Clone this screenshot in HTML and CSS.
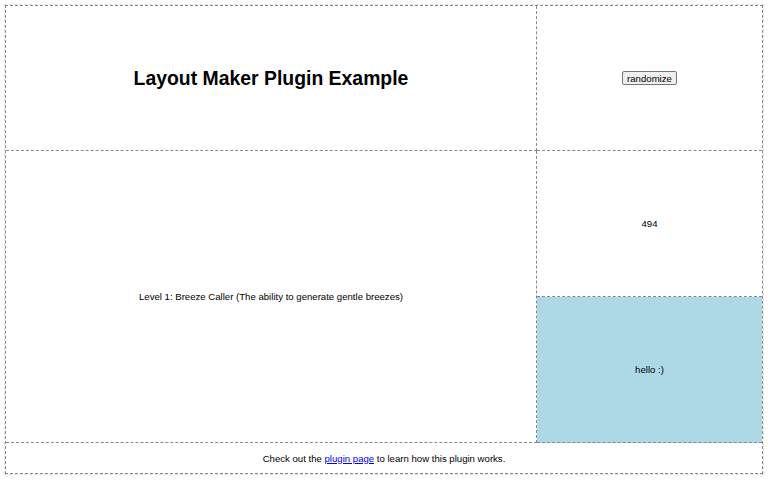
FILE: index.html
```html
<!DOCTYPE html>
<html>
<head>
<meta charset="utf-8">
<link rel="stylesheet" href="styles.css">
</head>
<body>
<div class="layout">
  <div class="cell title-cell"><h1 class="title">Layout Maker Plugin Example</h1></div>
  <div class="cell side"><button class="btn">randomize</button></div>
  <div class="cell main"><span>Level 1: Breeze Caller (The ability to generate gentle breezes)</span></div>
  <div class="cell side"><span>494</span></div>
  <div class="cell side blue"><span>hello :)</span></div>
  <div class="cell footer"><span>Check out the <a href="#">plugin page</a> to learn how this plugin works.</span></div>
</div>
</body>
</html>
```
FILE: styles.css
```css
html, body {
  margin: 0;
  padding: 0;
  background: #ffffff;
}
body {
  padding: 5px;
  font-family: "Liberation Sans", Arial, sans-serif;
  font-size: 9.6px;
  color: #000;
}
.layout {
  width: 758px;
  height: 469px;
  box-sizing: border-box;
  border: 1px dashed #888;
  outline: 1px dashed #e0e0e0;
  display: grid;
  grid-template-columns: 531px 1fr;
  grid-template-rows: 145px 146px 146px 1fr;
}
.cell {
  display: flex;
  align-items: center;
  justify-content: center;
  text-align: center;
  box-sizing: border-box;
  border-right: 1px dashed #888;
  border-bottom: 1px dashed #888;
}
.side {
  border-right: none;
}
.title-cell {
  grid-column: 1;
  grid-row: 1;
}
.main {
  grid-column: 1;
  grid-row: 2 / span 2;
}
.footer {
  grid-column: 1 / span 2;
  border-right: none;
  border-bottom: none;
}
.blue {
  background: #add8e6;
}
.title {
  margin: 0;
  font-size: 19.4px;
  font-weight: bold;
}
.btn {
  font-family: "Liberation Sans", Arial, sans-serif;
  font-size: 9.6px;
  padding: 0 4px;
  height: 14px;
  background: #efefef;
  border: 1px solid #767676;
  border-radius: 2px;
  color: #000;
}
a {
  color: #0000ee;
}
```
